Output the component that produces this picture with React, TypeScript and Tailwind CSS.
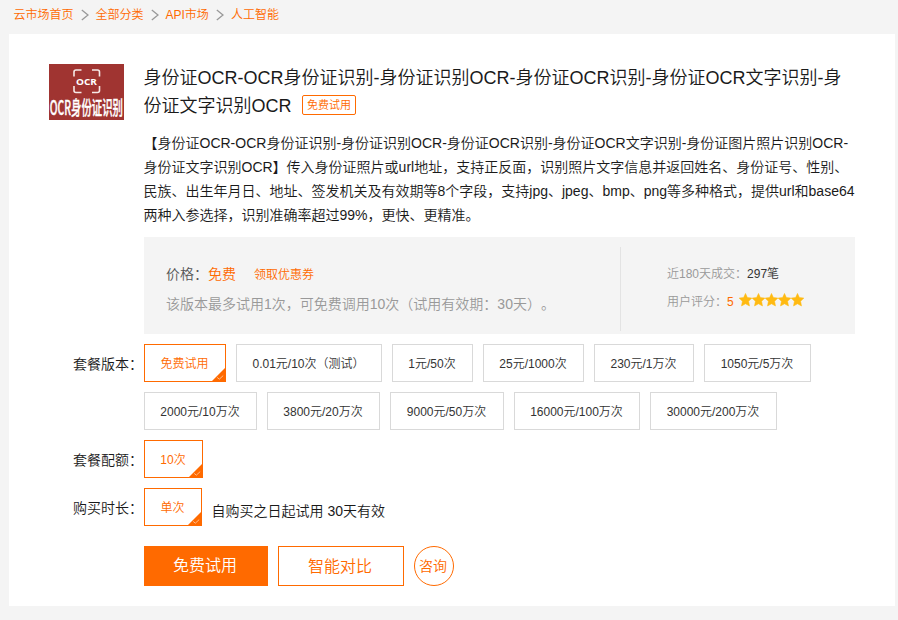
import { Fragment, useState } from "react";
import clsx from "clsx";

const crumbs = ["云市场首页", "全部分类", "API市场", "人工智能"];

const titleLines = [
  "身份证OCR-OCR身份证识别-身份证识别OCR-身份证OCR识别-身份证OCR文字识别-身",
  "份证文字识别OCR",
];

const descriptionLines = [
  "【身份证OCR-OCR身份证识别-身份证识别OCR-身份证OCR识别-身份证OCR文字识别-身份证图片照片识别OCR-",
  "身份证文字识别OCR】传入身份证照片或url地址，支持正反面，识别照片文字信息并返回姓名、身份证号、性别、",
  "民族、出生年月日、地址、签发机关及有效期等8个字段，支持jpg、jpeg、bmp、png等多种格式，提供url和base64",
  "两种入参选择，识别准确率超过99%，更快、更精准。",
];

const packages = [
  { label: "免费试用", width: "w-[82px]" },
  { label: "0.01元/10次（测试）", width: "w-[146px]" },
  { label: "1元/50次", width: "w-[81px]" },
  { label: "25元/1000次", width: "w-[101px]" },
  { label: "230元/1万次", width: "w-[100px]" },
  { label: "1050元/5万次", width: "w-[107px]" },
  { label: "2000元/10万次", width: "w-[113px]" },
  { label: "3800元/20万次", width: "w-[113px]" },
  { label: "9000元/50万次", width: "w-[114px]" },
  { label: "16000元/100万次", width: "w-[126px]" },
  { label: "30000元/200万次", width: "w-[127px]" },
];

function Logo() {
  return (
    <svg
      width="75"
      height="56"
      viewBox="0 0 75 56"
      className="block overflow-visible"
    >
      <rect width="75" height="56" fill="#a03431" />
      <g fill="none" stroke="#f6e9e8" strokeWidth="1.6">
        <path d="M25 12.5V8Q25 6 27 6H32.5" />
        <path d="M43 6H48.5Q50.5 6 50.5 8V12.5" />
        <path d="M25 22V26.5Q25 28.5 27 28.5H32.5" />
        <path d="M43 28.5H48.5Q50.5 28.5 50.5 26.5V22" />
      </g>
      <text
        x="27"
        y="20.8"
        fill="#fff"
        fontSize="9.5"
        fontWeight="700"
        fontFamily="Open Sans, sans-serif"
        textLength="21"
        lengthAdjust="spacingAndGlyphs"
      >
        OCR
      </text>
      <g transform="translate(0.8 51.4) scale(0.59 1)">
        <text
          x="0"
          y="0"
          fill="#fff"
          stroke="#fff"
          strokeWidth="0.4"
          fontSize="19.5"
          fontWeight="500"
          fontFamily="Noto Sans CJK SC, sans-serif"
          textLength="124"
          lengthAdjust="spacingAndGlyphs"
        >
          OCR身份证识别
        </text>
      </g>
    </svg>
  );
}

function Star() {
  return (
    <svg width="13" height="14" viewBox="0 0 13 14">
      <path
        d="M6.5 0.4L8.4 4.6L12.9 5.1L9.6 8.3L10.5 13L6.5 10.8L2.5 13L3.4 8.3L0.1 5.1L4.6 4.6Z"
        fill="#ffba12"
        stroke="#ffba12"
        strokeWidth="0.5"
      />
    </svg>
  );
}

type OptionProps = {
  label: string;
  width: string;
  selected?: boolean;
  onClick?: () => void;
};

function Option({ label, width, selected, onClick }: OptionProps) {
  return (
    <button
      onClick={onClick}
      className={clsx(
        "relative h-[38px] shrink-0 border pt-0.5 pr-px text-center text-xs whitespace-nowrap",
        width,
        selected
          ? "border-[#ff6a00] text-[#ff6a00]"
          : "border-[#d9d9d9] text-[#333]",
      )}
    >
      {label}
      {selected && (
        <svg
          width="15"
          height="15"
          viewBox="0 0 15 15"
          className="absolute -right-px -bottom-px"
        >
          <path d="M15 0V15H0Z" fill="#ff6a00" />
          <path
            d="M6.2 10.4L8.3 12.2L12.2 8.6"
            fill="none"
            stroke="#ffbd8c"
            strokeWidth="1"
          />
        </svg>
      )}
    </button>
  );
}

function Row({
  label,
  children,
}: {
  label: string;
  children: React.ReactNode;
}) {
  return (
    <div className="flex">
      <div className="h-[38px] w-[71px] shrink-0 text-sm leading-[40px] whitespace-nowrap">
        {label}
      </div>
      <div className="flex flex-1 flex-wrap gap-2.5">{children}</div>
    </div>
  );
}

export default function App() {
  const [selected, setSelected] = useState(0);

  return (
    <div className="h-[620px] w-[898px] overflow-hidden bg-[#f4f4f4] font-['Liberation_Sans','Noto_Sans_CJK_SC',sans-serif] font-[350] text-[#1a1a1a] [text-spacing-trim:space-all]">
      <nav className="flex h-[34px] items-center pb-1 pl-[13.5px] text-xs text-[#ff6a00]">
        {crumbs.map((crumb, i) => (
          <Fragment key={crumb}>
            {i > 0 && (
              <svg width="8" height="12" viewBox="0 0 8 12" className="mx-[7px]">
                <path
                  d="M0.8 1L7 6L0.8 11"
                  fill="none"
                  stroke="#999"
                  strokeWidth="1.3"
                />
              </svg>
            )}
            <a>{crumb}</a>
          </Fragment>
        ))}
      </nav>

      <main className="ml-[9px] h-[572px] w-[886px] bg-white pt-[30px] pl-10">
        <div className="flex">
          <div className="w-[95px] shrink-0">
            <Logo />
          </div>
          <div className="w-[711px]">
            <h1 className="text-lg leading-7 font-[350] whitespace-nowrap">
              <div className="-ml-[0.5px] h-7">{titleLines[0]}</div>
              <div className="-ml-[0.5px] flex h-7 items-start">
                {titleLines[1]}
                <span className="mt-[3px] ml-[10.5px] h-5 w-[54px] rounded-xs border border-[#ff6a00] text-center text-[11px] leading-[18px] text-[#ff6a00]">
                  免费试用
                </span>
              </div>
            </h1>
            <div className="mt-[11px] -ml-[0.5px] text-sm leading-6 whitespace-nowrap">
              {descriptionLines.map((line) => (
                <p key={line} className="h-6">
                  {line}
                </p>
              ))}
            </div>
            <section className="mt-[10px] flex h-[97px] bg-[#f4f4f4] pt-[10px]">
              <div className="h-[84px] w-[477px] border-r border-[#e3e3e3] pt-3 pl-[22px] text-sm leading-[30px]">
                <div className="flex h-[30px]">
                  <span className="text-[#555]">价格：</span>
                  <span className="text-[#ff6a00]">免费</span>
                  <a className="ml-[18px] text-xs leading-[32px] text-[#ff6a00]">
                    领取优惠券
                  </a>
                </div>
                <p className="text-[#999]">
                  该版本最多试用1次，可免费调用10次（试用有效期：30天）。
                </p>
              </div>
              <div className="pt-[13px] pl-[46px] text-xs leading-7 text-[#999]">
                <div className="flex h-7">
                  近180天成交：<span className="text-[#333]">297笔</span>
                </div>
                <div className="flex h-7">
                  用户评分：
                  <span className="text-[#ff6a00]">5</span>
                  <span className="ml-[5px] flex h-6 items-center">
                    {[0, 1, 2, 3, 4].map((n) => (
                      <Star key={n} />
                    ))}
                  </span>
                </div>
              </div>
            </section>
          </div>
        </div>

        <div className="mt-[10px] ml-6 flex w-[782px] flex-col gap-2.5">
          <Row label="套餐版本：">
            {packages.map((item, i) => (
              <Option
                key={item.label}
                {...item}
                selected={selected === i}
                onClick={() => setSelected(i)}
              />
            ))}
          </Row>
          <Row label="套餐配额：">
            <Option label="10次" width="w-[59px]" selected />
          </Row>
          <Row label="购买时长：">
            <Option label="单次" width="w-[58px]" selected />
            <span className="-ml-[0.5px] pt-1 text-sm leading-[38px]">
              自购买之日起试用 30天有效
            </span>
          </Row>
        </div>

        <div className="mt-4 ml-[95px] flex gap-2.5 text-base">
          <button className="h-10 w-[124px] bg-[#ff6a00] pr-0.5 text-white">
            免费试用
          </button>
          <button className="h-10 w-[126px] border border-[#ff6a00] pt-px pr-0.5 text-[#ff6a00]">
            智能对比
          </button>
          <button className="h-10 w-10 rounded-full border border-[#ff6a00] pr-0.5 text-sm text-[#ff6a00]">
            咨询
          </button>
        </div>
      </main>
    </div>
  );
}
